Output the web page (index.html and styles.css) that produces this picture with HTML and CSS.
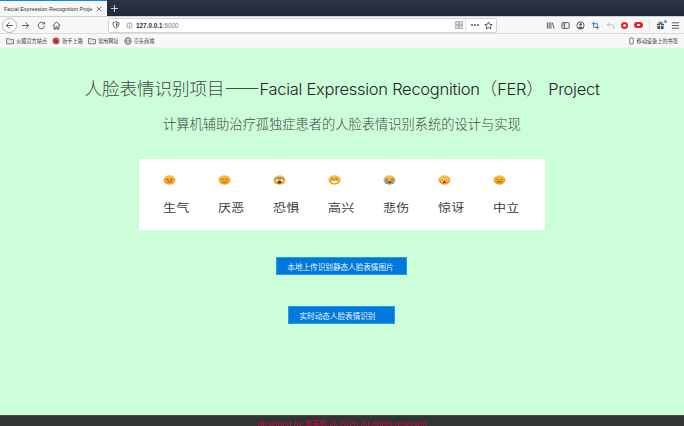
FILE: index.html
```html
<!DOCTYPE html>
<html lang="zh">
<head>
<meta charset="utf-8">
<title>Facial Expression Recognition Project</title>
<link rel="stylesheet" href="styles.css">
</head>
<body>
<div class="tabbar">
  <div class="tab"><span class="tab-title">Facial Expression Recognition Proje</span><svg class="tab-x" viewBox="0 0 8 8"><path d="M1 1l6 6M7 1l-6 6"/></svg></div>
  <svg class="tab-plus" viewBox="0 0 8 8"><path d="M4 0v8M0 4h8"/></svg>
</div>
<div class="toolbar">
  <div class="nav">
    <div class="back"><svg viewBox="0 0 10 10"><path d="M9 5H1.500M5 1.500L1.500 5 5 8.500"/></svg></div>
    <svg class="ico" viewBox="0 0 10 10"><path d="M1 5h7.500M5 1.500L8.500 5 5 8.500"/></svg>
    <svg class="ico" viewBox="0 0 10 10"><path d="M8.500 5.500A3.600 3.600 0 1 1 7.500 2.400M8.500 .8v2.400H6.100"/></svg>
    <svg class="ico" viewBox="0 0 10 10"><path d="M1 5l4-4 4 4M2.300 4.300V9h2V6.500h1.400V9h2V4.300"/></svg>
  </div>
  <div class="urlbar">
    <svg class="shield" viewBox="0 0 10 10"><path d="M5 .8l3.800 1.200c0 3.500-1 6-3.800 7.200C2.200 8 1.200 5.500 1.200 2z"/><path class="fill" d="M5 2.500l2 .7C7 5 6.400 6.600 5 7.400z"/></svg>
    <svg class="info" viewBox="0 0 10 10"><circle cx="5" cy="5" r="3.800"/><path d="M5 4.500v2.500M5 2.700v.9"/></svg>
    <span class="host">127.0.0.1</span><span class="port">:5000</span>
    <span class="spacer"></span>
    <svg class="qr" viewBox="0 0 8 8"><rect width="8" height="8" fill="#b4b7bd"/><path d="M1 1h2v2H1zM5 1h2v2H5zM1 5h2v2H1zM5 5h2v2H5z" fill="#dcdde0"/></svg>
    <span class="divider"></span>
    <svg class="dots" viewBox="0 0 8 2"><circle cx="1" cy="1" r=".9"/><circle cx="4" cy="1" r=".9"/><circle cx="7" cy="1" r=".9"/></svg>
    <svg class="star" viewBox="0 0 10 10"><path d="M5 1l1.200 2.700 2.900.3-2.200 1.900.7 2.900L5 7.300 2.400 8.800l.7-2.900L.9 4l2.900-.3z"/></svg>
  </div>
  <div class="tools">
    <svg class="ico" viewBox="0 0 10 10"><path d="M1.500 1.500v7M3.500 1.500v7M5.500 1.500v7M7 1.800l2 6.700"/></svg>
    <svg class="ico" viewBox="0 0 10 10"><rect x="1" y="1.800" width="8" height="6.400" rx="1"/><path d="M4 1.800v6.400M2 3.500h1M2 5h1"/></svg>
    <svg class="ico" viewBox="0 0 10 10"><circle cx="5" cy="5" r="4"/><circle class="fill" cx="5" cy="4" r="1.400"/><path class="fill" d="M2.500 7.500c.5-1.500 4.500-1.500 5 0A4 4 0 0 1 2.500 7.500z"/></svg>
    <svg class="ico crop" viewBox="0 0 10 10"><path d="M3 .8V7h6.200M.8 3H7v6.200"/></svg>
    <svg class="ico undo" viewBox="0 0 10 10"><path d="M4 1.500L1.500 4 4 6.500M1.500 4H6a2.500 2.500 0 0 1 2.500 2.500V8.500"/></svg>
    <span class="red-dot"></span>
    <span class="red-pill"></span>
    <span class="tool-sep"></span>
    <span class="gift-wrap">
      <svg class="ico gift" viewBox="0 0 10 10"><path class="fill" d="M1 3h3.500v1.800H1zM5.500 3H9v1.800H5.500zM1.600 5.500h2.900V9H1.600zM5.500 5.500h2.900V9H5.500z"/><path d="M5 3C3 3 2.500 1 3.800 1 4.600 1 5 3 5 3c0 0 .4-2 1.200-2C7.500 1 7 3 5 3z"/></svg>
      <span class="badge"></span>
    </span>
    <svg class="ico menu" viewBox="0 0 10 10"><path d="M1 2h8M1 5h8M1 8h8"/></svg>
  </div>
</div>
<div class="bookmarks">
  <span class="bm"><svg class="folder" viewBox="0 0 10 10"><path d="M.7 2h3l1 1h4.600v5.500H.7z"/></svg>火狐官方站点</span>
  <span class="bm"><svg class="firefox" viewBox="0 0 10 10"><circle cx="5" cy="5" r="4.500" fill="#f26b21"/><circle cx="5.300" cy="5.500" r="2.500" fill="#4b3fa8"/><path d="M1 3.500C2 1 6 .2 8.500 2.500 6 2 3.500 3 3.500 6 2.500 6 1.500 5 1 3.500z" fill="#e8232f"/></svg>新手上路</span>
  <span class="bm"><svg class="folder" viewBox="0 0 10 10"><path d="M.7 2h3l1 1h4.600v5.500H.7z"/></svg>常用网址</span>
  <span class="bm"><svg class="globe" viewBox="0 0 10 10"><circle cx="5" cy="5" r="4.200"/><ellipse cx="5" cy="5" rx="2" ry="4.200"/><path d="M.8 5h8.400"/></svg>京东商城</span>
  <span class="spacer"></span>
  <span class="bm mobile"><svg class="phone" viewBox="0 0 10 10"><rect x="2.500" y=".7" width="5" height="8.600" rx=".8"/></svg>移动设备上的书签</span>
</div>
<main class="page">
  <h1 class="title">人脸表情识别项目<span class="dash">——</span><span class="latin">Facial Expression Recognition</span>（<span class="latin">FER</span>）<span class="latin"> Project</span></h1>
  <h2 class="subtitle">计算机辅助治疗孤独症患者的人脸表情识别系统的设计与实现</h2>
  <section class="panel">
    <div class="emotion">
      <svg class="emoji" viewBox="0 0 14 14" preserveAspectRatio="none"><defs><linearGradient id="skin" x1="0" y1="0" x2="0" y2="1"><stop offset="0" stop-color="#fbc23f"/><stop offset="1" stop-color="#f4961d"/></linearGradient></defs><circle class="face" cx="7" cy="7" r="6.500"/><path class="mouth" d="M5 10c1-1 3-1 4 0M3.800 5.500l2 1M10.200 5.500l-2 1"/><path class="eye" d="M4.500 6.800h1.300M8.200 6.800h1.300"/></svg>
      <span class="label">生气</span>
    </div>
    <div class="emotion">
      <svg class="emoji" viewBox="0 0 14 14" preserveAspectRatio="none"><circle class="face" cx="7" cy="7" r="6.500"/><path class="mouth" d="M5 9.800c1.200.8 2.800.8 4 0M3.500 6h2.500M8 6h2.500"/></svg>
      <span class="label">厌恶</span>
    </div>
    <div class="emotion">
      <svg class="emoji" viewBox="0 0 14 14" preserveAspectRatio="none"><circle class="face" cx="7" cy="7" r="6.500"/><path d="M1.500 6.500A6 6 0 0 1 12.500 6.500C10 5 4 5 1.500 6.500z" fill="#4f8fe0"/><ellipse cx="7" cy="10" rx="2" ry="2.200" fill="#7a3b12"/><circle cx="4.500" cy="7.500" r="1.200" fill="#fff"/><circle cx="9.500" cy="7.500" r="1.200" fill="#fff"/><path d="M.8 11.500l2.700-2.500 1 3zM13.200 11.500L10.500 9l-1 3z" fill="#f6a821"/></svg>
      <span class="label">恐惧</span>
    </div>
    <div class="emotion">
      <svg class="emoji" viewBox="0 0 14 14" preserveAspectRatio="none"><circle class="face" cx="7" cy="7" r="6.500"/><path d="M3.500 8.500h7c0 2-1.500 3-3.500 3s-3.500-1-3.500-3z" fill="#fff"/><path class="mouth" d="M3.800 6c.5-1 1.700-1 2.200 0M8 6c.5-1 1.700-1 2.200 0"/></svg>
      <span class="label">高兴</span>
    </div>
    <div class="emotion">
      <svg class="emoji" viewBox="0 0 14 14" preserveAspectRatio="none"><circle class="face" cx="7" cy="7" r="6.500"/><path d="M4.500 9h5c0 1.500-1 2.500-2.500 2.500S4.500 10.500 4.500 9z" fill="#7a3b12"/><path d="M1.800 6h3v6.500H2.500zM9.200 6h3l-.7 6.500H9.200z" fill="#5da7ea"/><path class="mouth" d="M3 5.500l2.200.5M11 5.500L8.800 6"/></svg>
      <span class="label">悲伤</span>
    </div>
    <div class="emotion">
      <svg class="emoji" viewBox="0 0 14 14" preserveAspectRatio="none"><circle class="face" cx="7" cy="7" r="6.500"/><ellipse cx="7" cy="10" rx="1.300" ry="1.500" fill="#7a3b12"/><circle cx="4.600" cy="6" r="1.600" fill="#fff"/><circle cx="9.400" cy="6" r="1.600" fill="#fff"/><circle cx="4.600" cy="6" r=".7" fill="#4a2a10"/><circle cx="9.400" cy="6" r=".7" fill="#4a2a10"/></svg>
      <span class="label">惊讶</span>
    </div>
    <div class="emotion">
      <svg class="emoji" viewBox="0 0 14 14" preserveAspectRatio="none"><circle class="face" cx="7" cy="7" r="6.500"/><path class="mouth" d="M4.500 9.500h5M4 6.200h1.500M8.500 6.200H10"/></svg>
      <span class="label">中立</span>
    </div>
  </section>
  <a class="btn btn-upload" href="#">本地上传识别静态人脸表情图片</a>
  <a class="btn btn-live" href="#">实时动态人脸表情识别</a>
</main>
<footer class="footer"><span class="footer-text">designed by 李英辉 @ 2020 All rights reserved</span></footer>
</body>
</html>
```
FILE: styles.css
```css
* { box-sizing: border-box; }
html, body { margin: 0; height: 426px; overflow: hidden; }
body {
  display: flex;
  flex-direction: column;
  width: 684px;
  font-family: "Noto Sans CJK SC", "Liberation Sans", sans-serif;
}
svg { display: block; flex: none; fill: none; stroke: #4a4a4f; stroke-width: 1; }
svg .fill { fill: #4a4a4f; stroke: none; }
.spacer { flex: 1; }

.tabbar {
  height: 16px;
  display: flex;
  align-items: center;
  background: linear-gradient(#2c3444, #222a38);
  flex: none;
}
.tab {
  width: 107px;
  height: 16px;
  display: flex;
  align-items: center;
  padding: 1px 5px 0 4px;
  background: #f7f7f8;
  border-top: 1px solid #0a84ff;
}
.tab-title {
  flex: 1;
  font: 5.500px "Liberation Sans", sans-serif;
  color: #333;
  white-space: nowrap;
  overflow: hidden;
}
.tab-x { width: 6px; height: 6px; }
.tab-plus { width: 7px; height: 7px; margin-left: 4px; stroke: #c8ccd2; stroke-width: 1.200; }

.toolbar {
  height: 18px;
  flex: none;
  display: flex;
  align-items: center;
  background: #f7f7f8;
  border-top: 1px solid #cfd0d2;
  border-bottom: 1px solid #dcdcde;
}
.nav { display: flex; align-items: center; gap: 6.500px; padding-left: 2px; width: 108px; flex: none; }
.back {
  width: 15px;
  height: 15px;
  margin-right: -2.500px;
  border: 1px solid #b8b8bb;
  border-radius: 50%;
  background: #fff;
  display: flex;
  align-items: center;
  justify-content: center;
}
.back svg { width: 9px; height: 9px; }
.ico { width: 9px; height: 9px; }
.urlbar {
  width: 389px;
  flex: none;
  height: 15px;
  display: flex;
  align-items: center;
  background: #fff;
  border: 1px solid #d4d4d6;
  border-radius: 2px;
  padding: 0 2px 0 3px;
  font: 6.400px "Liberation Sans", sans-serif;
}
.shield { width: 8px; height: 8px; margin-right: 6px; }
.info { width: 7px; height: 7px; margin-right: 3px; stroke: #777; }
.host { color: #333; font-weight: bold; }
.port { color: #777; }
.qr { width: 8px; height: 8px; margin-right: 2px; stroke: none; }
.divider { width: 1px; height: 13px; background: #e4e4e6; margin-right: 5px; }
.dots { width: 8px; height: 2px; margin-right: 5px; stroke: none; fill: #444; }
.star { width: 9px; height: 9px; margin-right: 1px; }
.tools { flex: 1; display: flex; align-items: center; justify-content: flex-end; gap: 6px; padding-right: 4px; }
.crop { stroke: #3a6ea5; }
.undo { stroke: #b8bcc4; }
.red-dot { width: 7px; height: 7px; border-radius: 50%; background: radial-gradient(circle, #fff 1px, #e8202c 1.500px); flex: none; }
.red-pill { width: 9px; height: 6px; border-radius: 3px; background: radial-gradient(circle, #fff 1px, #e8202c 1.500px); flex: none; }
.tool-sep { width: 1px; height: 12px; background: #e2e2e4; flex: none; }
.gift-wrap { position: relative; width: 9px; height: 9px; flex: none; }
.badge { position: absolute; top: -1px; right: -2px; width: 3px; height: 3px; border-radius: 50%; background: #2ca9f5; }

.bookmarks {
  height: 13px;
  flex: none;
  display: flex;
  align-items: center;
  gap: 5px;
  padding: 0 6px 0 6px;
  background: #f7f7f8;
  font-size: 5.200px;
  color: #333;
}
.bm { display: flex; align-items: center; gap: 2px; white-space: nowrap; }
.folder { width: 8px; height: 8px; stroke: #666; fill: #e4e4e6; }
.firefox { width: 8px; height: 8px; stroke: none; }
.globe { width: 8px; height: 8px; stroke: #555; stroke-width: .8; }
.phone { width: 7px; height: 8px; margin-right: -1px; }

.page {
  flex: 1;
  display: flex;
  flex-direction: column;
  align-items: center;
  background: #ccffd9;
  border-top: 1px solid #e4fce9;
  padding-top: 30px;
}
.title {
  margin: 0;
  font-family: "Noto Sans CJK SC", sans-serif;
  font-size: 17.500px;
  line-height: 20px;
  font-weight: 300;
  color: #444;
  white-space: nowrap;
}
.dash { color: #222; }
.latin {
  font-family: "Inter", sans-serif;
  font-size: 16.500px;
  letter-spacing: -.28px;
  color: #222;
  white-space: pre;
}
.subtitle {
  margin: 15px 0 0;
  font-size: 13.250px;
  line-height: 20px;
  font-weight: 300;
  color: #444;
  white-space: nowrap;
}
.panel {
  margin-top: 25px;
  width: 406px;
  height: 71px;
  flex: none;
  background: #fff;
  display: flex;
  padding: 16px 0 0 24px;
}
.emotion {
  width: 55px;
  flex: none;
  display: flex;
  flex-direction: column;
  align-items: flex-start;
}
.emoji { width: 13px; height: 10px; stroke: none; }
.face { fill: url(#skin); }
.mouth { stroke: #7a3b12; stroke-width: .8; fill: none; }
.eye { stroke: #7a3b12; stroke-width: 1; fill: none; }
.label {
  margin-top: 15px;
  font-size: 13px;
  line-height: 16px;
  letter-spacing: .3px;
  color: #3a3a3a;
  white-space: nowrap;
  font-weight: 400;
  transform: scaleY(.85);
}
.btn {
  display: flex;
  align-items: center;
  justify-content: center;
  height: 18px;
  flex: none;
  background: #0078dc;
  border: 1px solid #2a9be8;
  color: #e8f4fd;
  font-size: 7.600px;
  text-decoration: none;
  white-space: nowrap;
}
.btn-upload { width: 131px; margin-top: 27px; margin-right: 1px; padding-right: 2px; }
.btn-live { width: 107px; margin-top: 31px; margin-right: 1px; padding-right: 8px; }

.footer {
  height: 11px;
  flex: none;
  background: #333;
  border-top: 1px solid #4a4a4a;
  text-align: center;
  overflow: hidden;
}
.footer-text {
  display: block;
  margin-top: 3px;
  font: 7.500px/12px "Inter", "Noto Sans CJK SC", sans-serif;
  color: #c8004e;
  letter-spacing: .1px;
}
```
